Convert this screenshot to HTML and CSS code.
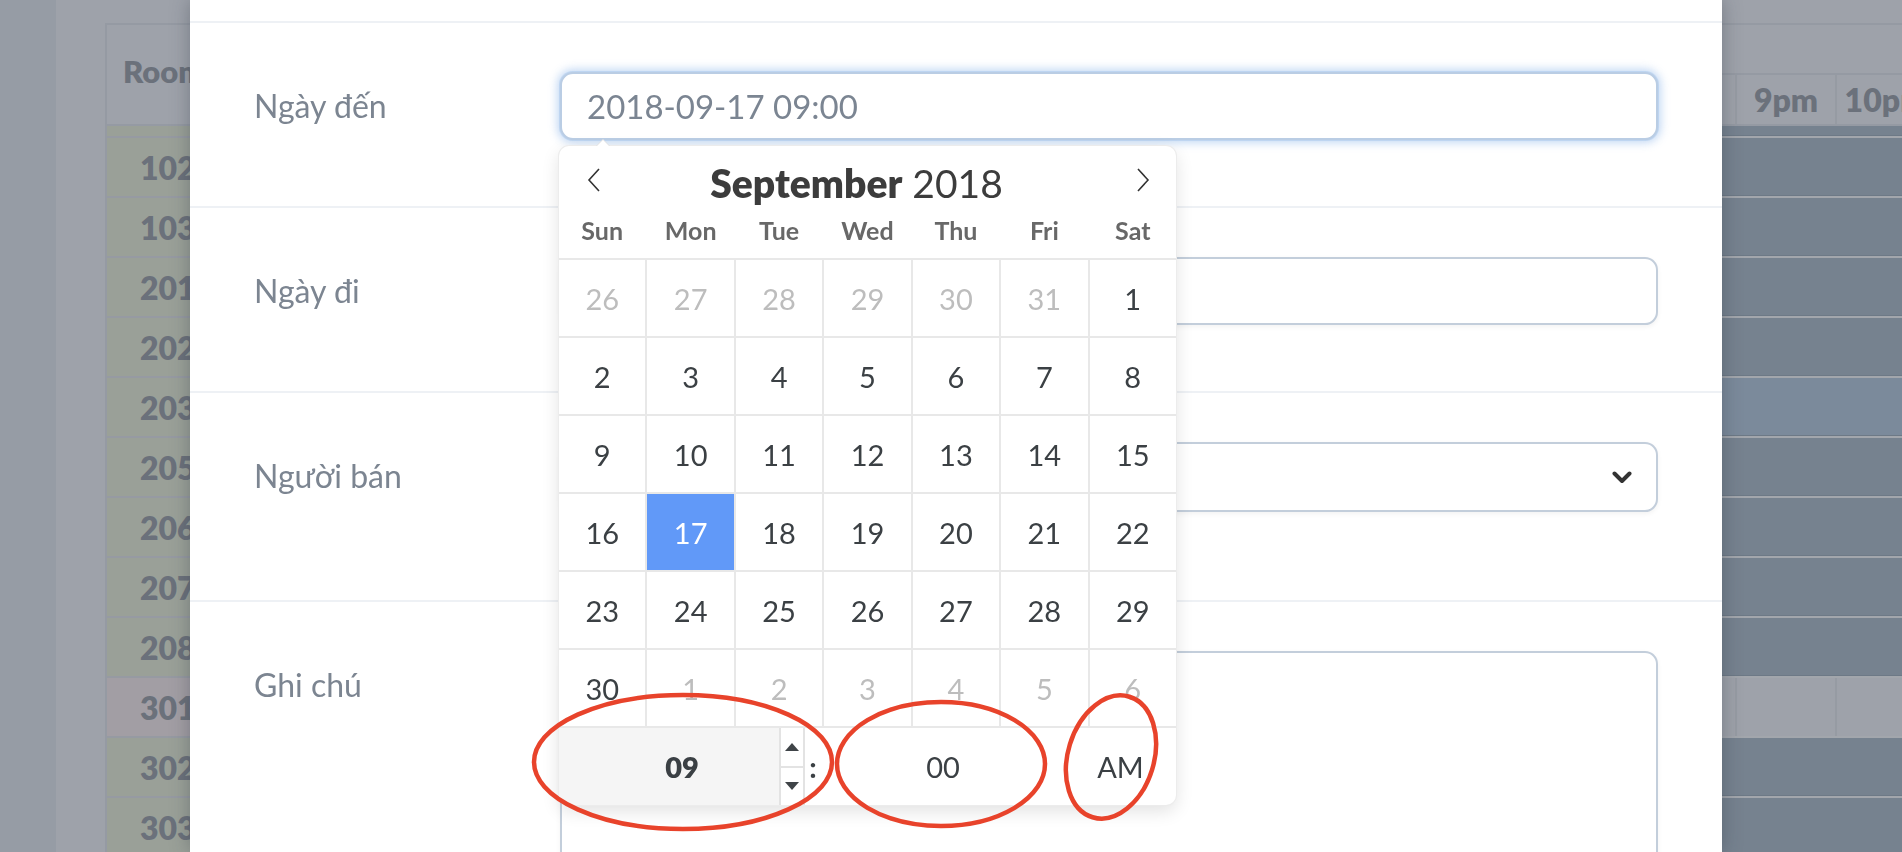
FILE: index.html
```html
<!DOCTYPE html>
<html lang="vi">
<head>
  <meta charset="UTF-8" />
  <meta name="viewport" content="width=device-width, initial-scale=1.0" />
  <title>Đặt phòng</title>
  <link rel="stylesheet" href="styles.css">
</head>
<body>

  <div class="app">
    <div class="rail"></div>
    <div class="board">
      <div class="sched">
        <div class="sched-head">
          <div class="room-head">Room</div>
          <div class="head-right">
            <div class="head-day"></div>
            <div class="head-hours">
              <span>6am</span><span>7am</span><span>8am</span><span>9am</span><span>10am</span><span>11am</span>
              <span>12pm</span><span>1pm</span><span>2pm</span><span>3pm</span><span>4pm</span><span>5pm</span>
              <span>6pm</span><span>7pm</span><span>8pm</span><span>9pm</span><span>10pm</span><span>11pm</span>
            </div>
          </div>
        </div>
        <div class="sched-row thin"><div class="room"></div><div class="track"></div></div>
        <div class="sched-row"><div class="room">102</div><div class="track"></div></div>
        <div class="sched-row"><div class="room">103</div><div class="track"></div></div>
        <div class="sched-row"><div class="room">201</div><div class="track"></div></div>
        <div class="sched-row"><div class="room">202</div><div class="track"></div></div>
        <div class="sched-row"><div class="room">203</div><div class="track blue"></div></div>
        <div class="sched-row"><div class="room">205</div><div class="track"></div></div>
        <div class="sched-row"><div class="room">206</div><div class="track"></div></div>
        <div class="sched-row"><div class="room">207</div><div class="track"></div></div>
        <div class="sched-row"><div class="room">208</div><div class="track"></div></div>
        <div class="sched-row"><div class="room pink">301</div>
          <div class="track empty">
            <span></span><span></span><span></span><span></span><span></span><span></span>
            <span></span><span></span><span></span><span></span><span></span><span></span>
            <span></span><span></span><span></span><span></span><span></span><span></span>
          </div>
        </div>
        <div class="sched-row"><div class="room">302</div><div class="track"></div></div>
        <div class="sched-row"><div class="room">303</div><div class="track"></div></div>
      </div>
    </div>
  </div>

  <div class="modal">
    <div class="modal-head"></div>

    <div class="form-row first">
      <label class="form-label">Ngày đến</label>
      <div class="input-wrap">
        <input class="field is-focus" type="text" value="2018-09-17 09:00">

        <div class="cal">
          <div class="cal-month">
            <span class="cal-nav">
              <svg width="14" height="24" viewBox="0 0 14 24"><path d="M12 1 L2 12 L12 23" fill="none" stroke="#333" stroke-width="1.6"/></svg>
            </span>
            <div class="cal-title"><b>September</b> 2018</div>
            <span class="cal-nav">
              <svg width="14" height="24" viewBox="0 0 14 24"><path d="M2 1 L12 12 L2 23" fill="none" stroke="#333" stroke-width="1.6"/></svg>
            </span>
          </div>
          <div class="cal-weekdays">
            <span>Sun</span><span>Mon</span><span>Tue</span><span>Wed</span><span>Thu</span><span>Fri</span><span>Sat</span>
          </div>
          <div class="cal-days">
            <span class="out">26</span><span class="out">27</span><span class="out">28</span><span class="out">29</span><span class="out">30</span><span class="out">31</span><span>1</span>
            <span>2</span><span>3</span><span>4</span><span>5</span><span>6</span><span>7</span><span>8</span>
            <span>9</span><span>10</span><span>11</span><span>12</span><span>13</span><span>14</span><span>15</span>
            <span>16</span><span class="selected">17</span><span>18</span><span>19</span><span>20</span><span>21</span><span>22</span>
            <span>23</span><span>24</span><span>25</span><span>26</span><span>27</span><span>28</span><span>29</span>
            <span>30</span><span class="out">1</span><span class="out">2</span><span class="out">3</span><span class="out">4</span><span class="out">5</span><span class="out">6</span>
          </div>
          <div class="cal-time">
            <div class="time-hour">09</div>
            <div class="spin"><i class="up"></i><i class="down"></i></div>
            <div class="time-sep">:</div>
            <div class="time-min">00</div>
            <div class="time-ampm">AM</div>
          </div>
        </div>
      </div>
    </div>

    <div class="form-row">
      <label class="form-label">Ngày đi</label>
      <div class="input-wrap">
        <input class="field" type="text" value="">
      </div>
    </div>

    <div class="form-row form-row--select">
      <label class="form-label">Người bán</label>
      <div class="input-wrap">
        <div class="field select">
          <svg width="20" height="13" viewBox="0 0 20 13"><path d="M2.5 2.5 L10 10 L17.5 2.5" fill="none" stroke="#333" stroke-width="4" stroke-linecap="round" stroke-linejoin="round"/></svg>
        </div>
      </div>
    </div>

    <div class="form-row form-row--note">
      <label class="form-label">Ghi chú</label>
      <div class="input-wrap">
        <textarea class="field note"></textarea>
      </div>
    </div>
  </div>

  <svg class="marks" width="1902" height="852" viewBox="0 0 1902 852">
    <ellipse cx="683" cy="762" rx="149" ry="67" />
    <ellipse cx="941" cy="764" rx="104" ry="62" />
    <ellipse cx="1111" cy="757" rx="43" ry="63" transform="rotate(17 1111 757)" />
  </svg>

</body>
</html>
```

FILE: styles.css
```css
body {
  margin: 0;
  font-family: Lato, "Open Sans", sans-serif;
  overflow: hidden;
  background: #969ca5;
}

.app {
  display: flex;
  height: 100vh;
}
.rail {
  width: 56px;
  background: #969ca5;
}
.board {
  flex: 1;
  background: #9ea2aa;
  padding: 23px 0 0 49px;
  overflow: hidden;
}
.sched {
  border-top: 2px solid #959aa3;
  border-left: 2px solid #959aa3;
  width: 2000px;
}
.sched-head {
  display: flex;
  height: 99px;
  border-bottom: 2px solid #959aa3;
}
.room-head {
  width: 128px;
  flex: none;
  padding: 0 0 8px 16px;
  box-sizing: border-box;
  font-size: 31px;
  font-weight: 800;
  color: #6b717b;
  display: flex;
  align-items: center;
}
.head-right {
  flex: 1;
  display: flex;
  flex-direction: column;
}
.head-day {
  height: 48px;
  border-bottom: 2px solid #959aa3;
}
.head-hours {
  flex: 1;
  display: flex;
}
.head-hours span, .track.empty span {
  width: 100px;
  flex: none;
  box-sizing: border-box;
  border-left: 2px solid #969ba3;
}
.head-hours span {
  font-size: 32px;
  font-weight: 800;
  color: #6b717b;
  display: flex;
  align-items: center;
  justify-content: center;
}
.sched-row {
  display: flex;
  height: 60px;
}
.sched-row.thin {
  height: 12px;
}
.room {
  width: 128px;
  flex: none;
  box-sizing: border-box;
  padding-left: 33px;
  background: #9aa098;
  border-bottom: 2px solid #969aa2;
  font-size: 32px;
  font-weight: 800;
  color: #6b717b;
  display: flex;
  align-items: center;
}
.room.pink {
  background: #a29ea4;
}
.track {
  flex: 1;
  display: flex;
  background: #76828f;
  border-bottom: 2px solid #a2a6ac;
  box-shadow: inset 0 -1px 0 #6d7986;
}
.track.blue {
  background: #7b8a9b;
}
.track.empty {
  background: #9ea2aa;
  box-shadow: none;
}

/* modal */
.modal {
  position: fixed;
  top: 0;
  left: 190px;
  width: 1532px;
  height: 100vh;
  background: #fff;
  box-shadow: 0 0 18px rgba(40, 48, 60, 0.35);
  overflow: hidden;
}
.modal-head {
  height: 21px;
  border-bottom: 2px solid #eef1f5;
}
.form-row {
  display: flex;
  padding: 49px 64px 66px;
  border-bottom: 2px solid #eef1f5;
}
.form-row--select {
  padding-bottom: 88px;
}
.form-row--note {
  padding-bottom: 0;
  border-bottom: none;
}
.form-label {
  width: 306px;
  flex: none;
  font-size: 32px;
  line-height: 68px;
  color: #7c8591;
}
.input-wrap {
  position: relative;
  flex: 1;
}
.field {
  display: flex;
  align-items: center;
  width: 100%;
  height: 68px;
  box-sizing: border-box;
  margin: 0;
  padding: 0 25px;
  border: 2px solid #c3cedb;
  border-radius: 13px;
  background: #fff;
  box-shadow: 0 2px 5px rgba(0, 0, 0, 0.05);
  font: inherit;
  font-size: 33px;
  color: #7b8592;
  outline: none;
}
.field.is-focus {
  border-color: #bacde4;
  box-shadow: 0 0 0 1px rgba(150, 185, 230, 0.35), 0 0 9px 3px rgba(125, 170, 230, 0.45);
}
.select {
  height: 70px;
  justify-content: flex-end;
  padding-right: 24px;
}
.note {
  height: 260px;
  resize: none;
}

/* date picker */
.cal {
  position: absolute;
  top: calc(100% + 6px);
  left: -1px;
  width: 617px;
  background: #fff;
  border-radius: 10px;
  box-shadow: 0 0 0 1px #ececec, 0 6px 18px rgba(0, 0, 0, 0.12);
  overflow: hidden;
  z-index: 5;
}
.first .input-wrap::after {
  content: '';
  position: absolute;
  left: 36px;
  top: 68px;
  border: 7px solid transparent;
  border-bottom-color: #fff;
  border-top: none;
  z-index: 6;
  filter: drop-shadow(0 -1px 0 #e2e2e2);
}
.cal-month {
  display: flex;
  align-items: center;
  justify-content: space-between;
  height: 66px;
  padding: 0 26px 0 28px;
}
.cal-nav {
  display: flex;
  margin-top: 2px;
}
.cal-title {
  font-size: 39px;
  color: #3c3c3c;
  padding-top: 8px;
  margin-left: -24px;
}
.cal-title b {
  font-weight: 800;
}
.cal-weekdays, .cal-days {
  display: grid;
  grid-template-columns: repeat(7, 1fr);
  column-gap: 2px;
}
.cal-weekdays {
  height: 36px;
  padding-bottom: 10px;
  align-items: center;
  text-align: center;
  font-size: 25px;
  font-weight: 700;
  color: #686868;
}
.cal-days {
  grid-auto-rows: 76px;
  row-gap: 2px;
  background: #e8e8e8;
  border-top: 2px solid #e8e8e8;
}
.cal-days span {
  display: flex;
  align-items: center;
  justify-content: center;
  background: #fff;
  font-size: 29px;
  color: #3b4044;
}
.cal-days span.out {
  color: #bdbdbd;
}
.cal-days span.selected {
  background: #6199f8;
  color: #fff;
}
.cal-time {
  display: flex;
  height: 77px;
  border-top: 2px solid #e8e8e8;
  font-size: 29px;
  color: #3b4044;
}
.time-hour {
  width: 220px;
  padding-left: 26px;
  box-sizing: border-box;
  background: #f5f5f5;
  display: flex;
  align-items: center;
  justify-content: center;
  font-weight: 800;
}
.spin {
  width: 26px;
  box-sizing: border-box;
  display: flex;
  flex-direction: column;
  border-left: 2px solid #e3e3e3;
  border-right: 2px solid #e3e3e3;
  background: #fff;
}
.spin i {
  flex: 1;
  display: flex;
  align-items: center;
  justify-content: center;
}
.spin i.up {
  border-bottom: 2px solid #e3e3e3;
}
.spin i.up::before, .spin i.down::before {
  content: '';
  border-left: 7px solid transparent;
  border-right: 7px solid transparent;
}
.spin i.up::before {
  border-bottom: 8px solid #3f4448;
}
.spin i.down::before {
  border-top: 8px solid #3f4448;
}
.time-sep {
  width: 16px;
  display: flex;
  align-items: center;
  justify-content: center;
  font-weight: 700;
}
.time-min {
  flex: 1;
  display: flex;
  align-items: center;
  justify-content: center;
}
.time-ampm {
  width: 111px;
  display: flex;
  align-items: center;
  justify-content: center;
}

/* red hand-drawn marks */
.marks {
  position: fixed;
  top: 0;
  left: 0;
  pointer-events: none;
}
.marks ellipse {
  fill: none;
  stroke: #e8432b;
  stroke-width: 4.5;
}
```
